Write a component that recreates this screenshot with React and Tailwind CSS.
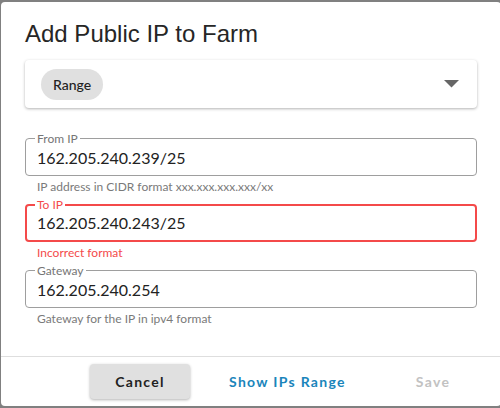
import React from 'react';

const FIELDS = [
  { label: 'From IP', value: '162.205.240.239/25', help: 'IP address in CIDR format xxx.xxx.xxx.xxx/xx' },
  { label: 'To IP', value: '162.205.240.243/25', help: 'Incorrect format', error: true },
  { label: 'Gateway', value: '162.205.240.254', help: 'Gateway for the IP in ipv4 format' },
];

function OutlinedField({ label, value, help, error }) {
  return (
    <div>
      <fieldset
        className={`h-[44px] rounded-[4px] px-[9px] ${error ? 'border-2 border-[#f44a4a]' : 'border border-[#9e9e9e]'}`}
      >
        <legend className={`px-[2px] text-[12px] leading-[13px] ${error ? '-ml-px text-[#f44a4a]' : 'text-[#757575]'}`}>
          {label}
        </legend>
        <div className={`pl-[2px] text-[16px] leading-[20px] text-[#222] ${error ? '-ml-px mt-[2px]' : 'mt-[3px]'}`}>{value}</div>
      </fieldset>
      <p className={`mt-[4px] pl-[12px] text-[12px] leading-[14px] ${error ? 'text-[#f44a4a]' : 'text-[#7a7a7a]'}`}>
        {help}
      </p>
    </div>
  );
}

export default function App() {
  return (
    <div className="h-[408px] w-[500px] overflow-hidden bg-[#808080] pl-px pt-[2px]" style={{ fontFamily: 'Lato, "Open Sans", sans-serif' }}>
      <div className="flex h-[404px] w-[500px] flex-col rounded-[4px] bg-white">
        <h2 className="px-6 pt-[18px] text-[24px] leading-[28px] text-[#262626]" style={{ fontFamily: '"Liberation Sans", Arial, sans-serif' }}>
          Add Public IP to Farm
        </h2>

        <div className="px-6">
          <div className="mt-[12px] flex h-[48px] w-[452px] items-center justify-between rounded-[4px] bg-white pl-4 pr-[18px] shadow-[0_1px_3px_rgba(0,0,0,0.3)]">
            <span className="flex h-[31px] items-center rounded-full bg-[#e0e0e0] px-[12px] text-[14px] font-medium text-[#222]">
              Range
            </span>
            <svg width="15" height="8" viewBox="0 0 15 8">
              <path d="M0 0 L15 0 L7.5 7.5 Z" fill="#666" />
            </svg>
          </div>

          <div className="mt-[24px] flex w-[452px] flex-col gap-[4px]">
            {FIELDS.map((f) => (
              <OutlinedField key={f.label} {...f} />
            ))}
          </div>
        </div>

        <div className="mt-auto border-t border-[#dedede]">
          <div className="flex h-[49px] items-center">
            <button className="ml-[89px] h-[35px] w-[100px] rounded-[4px] bg-[#e0e0e0] text-[14px] font-bold tracking-[1.3px] text-[#222] shadow-[0_1px_3px_rgba(0,0,0,0.3)]">
              Cancel
            </button>
            <button className="ml-[39px] text-[14px] font-bold tracking-[1.3px] text-[#1a85bb]">
              Show IPs Range
            </button>
            <button className="ml-[70px] text-[14px] font-bold tracking-[1.3px] text-[#c2c2c2]">
              Save
            </button>
          </div>
        </div>
      </div>
    </div>
  );
}
